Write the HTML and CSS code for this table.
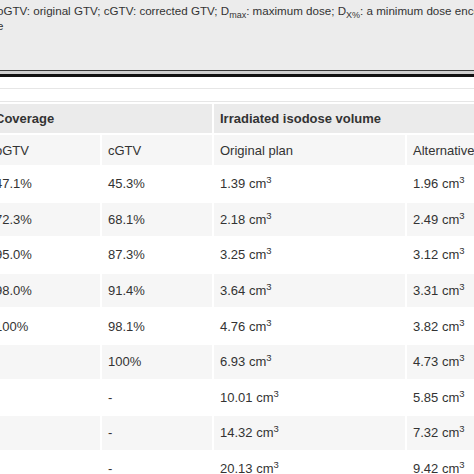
FILE: index.html
```html
<!DOCTYPE html>
<html>
<head>
<meta charset="utf-8">
<link rel="stylesheet" href="styles.css">
</head>
<body>
<div class="wrap">
  <div class="caption">
    <div class="cap-line">oGTV: original GTV; cGTV: corrected GTV; D<sub>max</sub>: maximum dose; D<sub>X%</sub>: a minimum dose encompassing X% of the volume</div>
    <div class="cap-line">e</div>
  </div>
  <div class="rule-thin"></div>
  <div class="rule-gap"></div>
  <div class="rule-thick"></div>
  <div class="spacer"></div>
  <div class="rule-light"></div>
  <div class="spacer2"></div>
  <div class="rule-light"></div>
  <table class="tbl">
    <colgroup>
      <col class="c1"><col class="c2"><col class="c3"><col class="c4">
    </colgroup>
    <tr class="head">
      <th colspan="2">Coverage</th>
      <th colspan="2">Irradiated isodose volume</th>
    </tr>
    <tr class="sub alt">
      <td>oGTV</td><td>cGTV</td><td>Original plan</td><td>Alternative plan</td>
    </tr>
    <tr><td>47.1%</td><td>45.3%</td><td>1.39 cm<sup>3</sup></td><td>1.96 cm<sup>3</sup></td></tr>
    <tr class="alt"><td>72.3%</td><td>68.1%</td><td>2.18 cm<sup>3</sup></td><td>2.49 cm<sup>3</sup></td></tr>
    <tr><td>95.0%</td><td>87.3%</td><td>3.25 cm<sup>3</sup></td><td>3.12 cm<sup>3</sup></td></tr>
    <tr class="alt"><td>98.0%</td><td>91.4%</td><td>3.64 cm<sup>3</sup></td><td>3.31 cm<sup>3</sup></td></tr>
    <tr><td>100%</td><td>98.1%</td><td>4.76 cm<sup>3</sup></td><td>3.82 cm<sup>3</sup></td></tr>
    <tr class="alt"><td>-</td><td>100%</td><td>6.93 cm<sup>3</sup></td><td>4.73 cm<sup>3</sup></td></tr>
    <tr><td>-</td><td>-</td><td>10.01 cm<sup>3</sup></td><td>5.85 cm<sup>3</sup></td></tr>
    <tr class="alt"><td>-</td><td>-</td><td>14.32 cm<sup>3</sup></td><td>7.32 cm<sup>3</sup></td></tr>
    <tr><td>-</td><td>-</td><td>20.13 cm<sup>3</sup></td><td>9.42 cm<sup>3</sup></td></tr>
  </table>
</div>
</body>
</html>
```
FILE: styles.css
```css
html, body {
  margin: 0;
  padding: 0;
  background: #ffffff;
  overflow: hidden;
}
body {
  width: 474px;
  height: 474px;
  font-family: "Liberation Sans", Arial, sans-serif;
  font-size: 13px;
  color: #333333;
}
.wrap {
  margin-left: -11px;
  width: 560px;
}
.caption {
  background: #ececec;
  height: 70px;
  padding: 3px 0 0 8px;
  box-sizing: border-box;
  font-size: 11.6px;
}
.cap-line {
  white-space: nowrap;
  line-height: 15px;
  height: 15px;
}
.cap-line sub {
  font-size: 9px;
  line-height: 0;
  vertical-align: -3px;
}
.rule-thin { height: 1px; background: #3a3a3a; }
.rule-gap { height: 3px; background: #cfcfcf; }
.rule-thick { height: 3px; background: #111111; }
.spacer { height: 11px; }
.spacer2 { height: 12px; }
.rule-light { height: 1px; background: #e6e6e6; }
.tbl {
  border-collapse: separate;
  border-spacing: 2px;
  margin: 0 -2px;
  table-layout: fixed;
  width: 564px;
}
.c1 { width: 111px; }
.c2 { width: 110px; }
.c3 { width: 191px; }
.c4 { width: 146px; }
.tbl th, .tbl td {
  padding: 0 6px;
  text-align: left;
  vertical-align: middle;
  white-space: nowrap;
  overflow: hidden;
}
.tbl th {
  background: #ebebeb;
  font-weight: bold;
  height: 29px;
}
.tbl td {
  height: 33.6px;
  background: #ffffff;
}
.tbl tr.alt td {
  background: #f6f6f6;
}
.tbl tr.sub td {
  height: 30px;
}
.tbl sup {
  font-size: 9.5px;
  line-height: 0;
  vertical-align: 5px;
}
```
